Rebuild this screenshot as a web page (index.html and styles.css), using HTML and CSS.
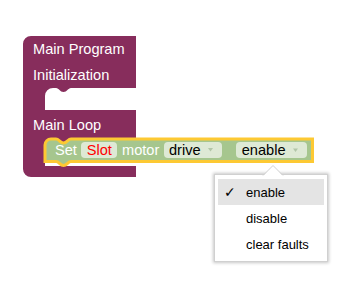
FILE: index.html
```html
<!DOCTYPE html>
<html>
<head>
<meta charset="utf-8">
<link rel="stylesheet" href="styles.css">
</head>
<body>
<div class="workspace">
  <svg class="canvas" width="350" height="300" viewBox="0 0 350 300" xmlns="http://www.w3.org/2000/svg">
    <path class="block-purple" d="M23,44 A8,8 0 0 1 31,36 H136 V88 H71 C68,88 67,92 63.5,92 C60,92 59,88 56,88 H53 A8,8 0 0 0 45,96 V110 H136 V139 H71 C68,139 67,143 63.5,143 C60,143 59,139 56,139 H53 A8,8 0 0 0 45,147 V166 H136 V177 H31 A8,8 0 0 1 23,169 Z"/>
    <text class="label" x="33" y="54">Main Program</text>
    <text class="label" x="33" y="79.5">Initialization</text>
    <text class="label" x="33" y="129.5">Main Loop</text>

    <path class="block-green" d="M45,145 A6,6 0 0 1 51,139 H56 C59,139 60,143 63.5,143 C67,143 68,139 71,139 H312.5 V161.5 H71 C68,161.5 67,165.5 63.5,165.5 C60,165.5 59,161.5 56,161.5 H45 Z"/>
    <text class="label" x="55" y="155">Set</text>
    <rect class="field" x="81" y="142" width="36" height="16" rx="4"/>
    <text class="label slot" x="86.7" y="155">Slot</text>
    <text class="label" x="122" y="155">motor</text>
    <rect class="field" x="164" y="142" width="58" height="16" rx="4"/>
    <text class="label dark" x="169" y="155">drive</text>
    <polygon class="arrow-tri" points="208,148 213,148 210.5,151.5"/>
    <rect class="field" x="236" y="142" width="71" height="16" rx="4"/>
    <text class="label dark" x="241.7" y="155">enable</text>
    <polygon class="arrow-tri" points="293,148.5 298,148.5 295.5,152"/>
  </svg>

  <div class="menu">
    <svg class="menu-arrow" width="22" height="11" viewBox="0 0 22 11" xmlns="http://www.w3.org/2000/svg">
      <path d="M1,11 L11,1 L21,11 Z" fill="#fff"/>
      <path d="M1,10.5 L11,0.5 L21,10.5" fill="none" stroke="#d0d0d0" stroke-width="1"/>
    </svg>
    <div class="item selected"><span class="check">✓</span><span class="item-text">enable</span></div>
    <div class="item"><span class="check"></span><span class="item-text">disable</span></div>
    <div class="item"><span class="check"></span><span class="item-text">clear faults</span></div>
  </div>
</div>
</body>
</html>
```

FILE: styles.css
```css
html, body {
  margin: 0;
  padding: 0;
  background: #ffffff;
}

.workspace {
  position: relative;
  width: 350px;
  height: 300px;
  overflow: hidden;
}

.canvas {
  display: block;
}

.block-purple {
  fill: #872d5c;
}

.block-green {
  fill: #a6c68e;
  stroke: #fdc933;
  stroke-width: 3;
}

.label {
  font-family: "Liberation Sans", Arial, sans-serif;
  font-size: 14.6px;
  fill: #ffffff;
}

.label.slot {
  fill: #ff0000;
}

.label.dark {
  fill: #000000;
}

.field {
  fill: #dee9d5;
}

.arrow-tri {
  fill: #b2c6a8;
}

.menu {
  position: absolute;
  left: 214px;
  top: 174px;
  width: 106px;
  padding: 4px 3px;
  background: #ffffff;
  border: 1px solid #d0d0d0;
  box-shadow: 0 0 3px 1px rgba(0, 0, 0, 0.22);
  font-family: "Liberation Sans", Arial, sans-serif;
  font-size: 13px;
  color: #000000;
}

.menu-arrow {
  position: absolute;
  left: 47px;
  top: -10px;
  display: block;
}

.item {
  display: flex;
  align-items: center;
  height: 26px;
}

.item.selected {
  background: #e4e4e4;
}

.check {
  width: 28px;
  padding-left: 6px;
  box-sizing: border-box;
  font-family: "DejaVu Sans", sans-serif;
  font-size: 14px;
  line-height: 1;
}

.item-text {
  white-space: nowrap;
}
```
